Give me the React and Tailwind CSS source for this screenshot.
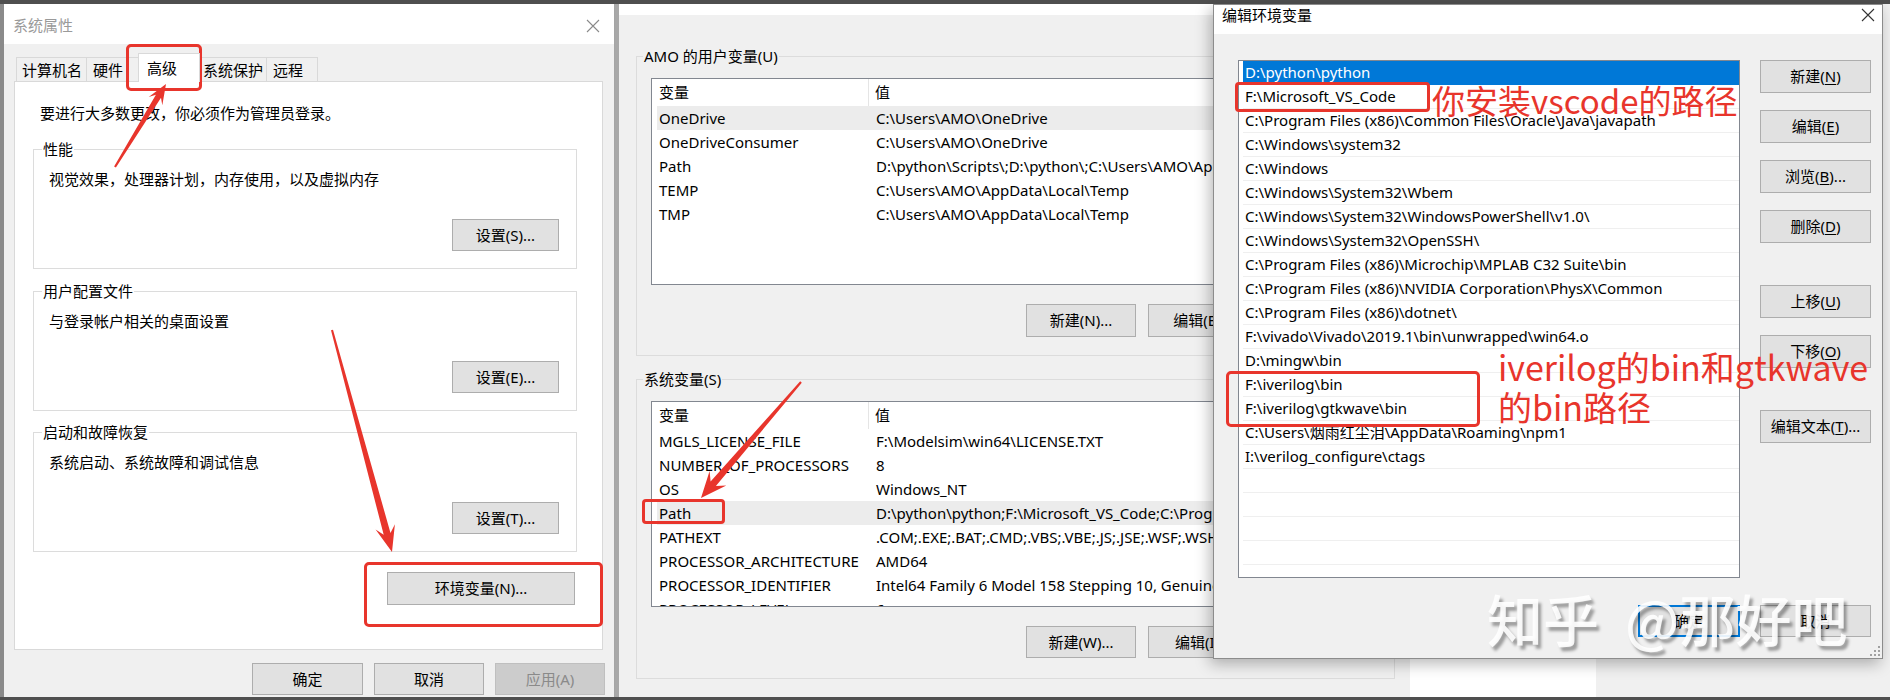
import React from 'react';

const RED = '#e8352c';

const Btn = ({ children, className = '', disabled = false, focused = false }) => (
  <div
    className={`flex shrink-0 items-center justify-center text-[15px] leading-none ${
      disabled
        ? 'border border-[#bfbfbf] bg-[#cccccc] text-[#8a8a8a]'
        : focused
        ? 'border-2 border-[#0078d7] bg-[#e1e1e1] text-black'
        : 'border border-[#adadad] bg-[#e1e1e1] text-black'
    } ${className}`}
  >
    {children}
  </div>
);

const Key = ({ k }) => <span className="underline underline-offset-2">{k}</span>;

const CloseX = ({ className }) => (
  <svg viewBox="0 0 14 14" className={className} fill="none" stroke="currentColor" strokeWidth="1.1">
    <path d="M1 1 L13 13 M13 1 L1 13" />
  </svg>
);

function arrowPts(x1, y1, x2, y2, head, hw, w0, w1) {
  const dx = x2 - x1;
  const dy = y2 - y1;
  const len = Math.hypot(dx, dy);
  const ux = dx / len;
  const uy = dy / len;
  const nx = -uy;
  const ny = ux;
  const bx = x2 - ux * head;
  const by = y2 - uy * head;
  const sx = x2 - ux * head * 0.72;
  const sy = y2 - uy * head * 0.72;
  const pts = [
    [x1 + (nx * w0) / 2, y1 + (ny * w0) / 2],
    [sx + (nx * w1) / 2, sy + (ny * w1) / 2],
    [bx + (nx * hw) / 2, by + (ny * hw) / 2],
    [x2, y2],
    [bx - (nx * hw) / 2, by - (ny * hw) / 2],
    [sx - (nx * w1) / 2, sy - (ny * w1) / 2],
    [x1 - (nx * w0) / 2, y1 - (ny * w0) / 2],
  ];
  return pts.map((p) => p.map((v) => v.toFixed(1)).join(',')).join(' ');
}

const userVars = [
  ['OneDrive', 'C:\\Users\\AMO\\OneDrive', true],
  ['OneDriveConsumer', 'C:\\Users\\AMO\\OneDrive'],
  ['Path', 'D:\\python\\Scripts\\;D:\\python\\;C:\\Users\\AMO\\AppData\\Local\\Microsoft\\WindowsApps;'],
  ['TEMP', 'C:\\Users\\AMO\\AppData\\Local\\Temp'],
  ['TMP', 'C:\\Users\\AMO\\AppData\\Local\\Temp'],
];

const sysVars = [
  ['MGLS_LICENSE_FILE', 'F:\\Modelsim\\win64\\LICENSE.TXT'],
  ['NUMBER_OF_PROCESSORS', '8'],
  ['OS', 'Windows_NT'],
  ['Path', 'D:\\python\\python;F:\\Microsoft_VS_Code;C:\\Program Files (x86)\\Common Files\\Oracle\\Java\\javapath;', true],
  ['PATHEXT', '.COM;.EXE;.BAT;.CMD;.VBS;.VBE;.JS;.JSE;.WSF;.WSH;.MSC'],
  ['PROCESSOR_ARCHITECTURE', 'AMD64'],
  ['PROCESSOR_IDENTIFIER', 'Intel64 Family 6 Model 158 Stepping 10, GenuineIntel'],
  ['PROCESSOR_LEVEL', '6'],
];

const paths = [
  'D:\\python\\python',
  'F:\\Microsoft_VS_Code',
  'C:\\Program Files (x86)\\Common Files\\Oracle\\Java\\javapath',
  'C:\\Windows\\system32',
  'C:\\Windows',
  'C:\\Windows\\System32\\Wbem',
  'C:\\Windows\\System32\\WindowsPowerShell\\v1.0\\',
  'C:\\Windows\\System32\\OpenSSH\\',
  'C:\\Program Files (x86)\\Microchip\\MPLAB C32 Suite\\bin',
  'C:\\Program Files (x86)\\NVIDIA Corporation\\PhysX\\Common',
  'C:\\Program Files (x86)\\dotnet\\',
  'F:\\vivado\\Vivado\\2019.1\\bin\\unwrapped\\win64.o',
  'D:\\mingw\\bin',
  'F:\\iverilog\\bin',
  'F:\\iverilog\\gtkwave\\bin',
  'C:\\Users\\烟雨红尘泪\\AppData\\Roaming\\npm1',
  'I:\\verilog_configure\\ctags',
  '', '', '', '', '',
];

// group box used in the left dialog
const Group = ({ title, text, btn, className = '' }) => (
  <fieldset className={`ml-[18px] w-[544px] min-w-0 border border-[#dcdcdc] pb-[17px] pl-[8px] ${className}`}>
    <legend className="px-[1px] text-[15px] leading-[20px]">{title}</legend>
    <div className="pl-[7px] pt-[10px] text-[15px] leading-[20px]">{text}</div>
    <div className="mt-[30px] flex justify-end pr-[17px]">
      <Btn className="h-[32px] w-[107px]">{btn}</Btn>
    </div>
  </fieldset>
);

function SystemProperties() {
  return (
    <div className="flex h-full w-[615px] shrink-0 flex-col border-l-4 border-r border-l-[#8a8a8a] border-r-[#a5a5a5] bg-[#f0f0f0]">
      <div className="flex h-[40px] shrink-0 items-center justify-between bg-white pl-[9px] pr-[14px] pt-[3px]">
        <span className="text-[15px] text-[#9a9a9a]">系统属性</span>
        <CloseX className="h-[14px] w-[14px] text-[#8a8a8a]" />
      </div>
      <div className="pl-[10px] pt-[9px]">
        <div className="flex items-end pl-[2px] text-[15px]">
          <div className="h-[24px] w-[70px] border-l border-t border-[#d9d9d9] pl-[5px] leading-[24px]">计算机名</div>
          <div className="h-[24px] w-[52px] border-l border-t border-[#d9d9d9] pl-[6px] leading-[24px]">硬件</div>
          <div className="relative z-10 -mb-px h-[29px] w-[62px] border-l border-r border-t border-[#d9d9d9] bg-white pl-[8px] leading-[28px]">高级</div>
          <div className="h-[24px] w-[66px] border-t border-[#d9d9d9] pl-[3px] leading-[24px]">系统保护</div>
          <div className="h-[24px] w-[52px] border-l border-r border-t border-[#d9d9d9] pl-[6px] leading-[24px]">远程</div>
        </div>
        <div className="h-[569px] w-[589px] border border-[#d9d9d9] bg-white">
          <div className="pl-[25px] pt-[21px] text-[15px] leading-[20px]">要进行大多数更改，你必须作为管理员登录。</div>
          <Group className="mt-[16px]" title="性能" text="视觉效果，处理器计划，内存使用，以及虚拟内存" btn="设置(S)..." />
          <Group className="mt-[12px]" title="用户配置文件" text="与登录帐户相关的桌面设置" btn="设置(E)..." />
          <Group className="mt-[11px]" title="启动和故障恢复" text="系统启动、系统故障和调试信息" btn="设置(T)..." />
          <div className="mt-[20px] flex justify-end pr-[27px]">
            <Btn className="h-[33px] w-[188px]">环境变量(N)...</Btn>
          </div>
        </div>
        <div className="mt-[13px] flex justify-end gap-[11px] pr-[9px]">
          <Btn className="h-[32px] w-[111px]">确定</Btn>
          <Btn className="h-[32px] w-[110px]">取消</Btn>
          <Btn disabled className="h-[32px] w-[110px]">应用(A)</Btn>
        </div>
      </div>
    </div>
  );
}

const VarList = ({ rows, height }) => (
  <div className={`w-[728px] overflow-hidden border border-[#828790] bg-white px-[5px] text-[15px] ${height}`}>
    <div className="flex h-[27px] items-center">
      <div className="h-full w-[212px] shrink-0 border-r border-[#e5e5e5] pl-[2px] leading-[27px]">变量</div>
      <div className="pl-[6px]">值</div>
    </div>
    {rows.map(([name, value, hi]) => (
      <div key={name + value} className={`flex h-[24px] items-center overflow-hidden whitespace-nowrap ${hi ? 'bg-[#ececec]' : ''}`}>
        <div className="w-[212px] shrink-0 overflow-hidden pl-[2px]">{name}</div>
        <div className="pl-[7px]">{value}</div>
      </div>
    ))}
  </div>
);

function EnvVariables() {
  return (
    <div className="flex h-full w-[791px] shrink-0 flex-col overflow-hidden bg-[#f0f0f0]">
      <div className="h-[11px] shrink-0 bg-white" />
      <fieldset className="ml-[17px] mt-[31px] w-[759px] min-w-0 border border-[#dcdcdc]">
        <legend className="ml-[6px] px-[1px] text-[15px] leading-[20px]">AMO 的用户变量(U)</legend>
        <div className="px-[14px] pb-[18px] pt-[12px]">
          <VarList rows={userVars} height="h-[207px]" />
          <div className="mt-[19px] flex justify-end gap-[12px]">
            <Btn className="h-[33px] w-[110px]">新建(N)...</Btn>
            <Btn className="h-[33px] w-[110px]">编辑(E)...</Btn>
            <Btn className="h-[33px] w-[110px]">删除(D)</Btn>
          </div>
        </div>
      </fieldset>
      <fieldset className="ml-[17px] mt-[13px] w-[759px] min-w-0 border border-[#dcdcdc]">
        <legend className="ml-[6px] px-[1px] text-[15px] leading-[20px]">系统变量(S)</legend>
        <div className="px-[14px] pb-[20px] pt-[12px]">
          <VarList rows={sysVars} height="h-[206px]" />
          <div className="mt-[19px] flex justify-end gap-[12px]">
            <Btn className="h-[32px] w-[110px]">新建(W)...</Btn>
            <Btn className="h-[32px] w-[110px]">编辑(I)...</Btn>
            <Btn className="h-[32px] w-[110px]">删除(L)</Btn>
          </div>
        </div>
      </fieldset>
    </div>
  );
}

const sideBtns = [
  [<>新建(<Key k="N" />)</>, 'mt-0'],
  [<>编辑(<Key k="E" />)</>, 'mt-[17px]'],
  [<>浏览(<Key k="B" />)...</>, 'mt-[17px]'],
  [<>删除(<Key k="D" />)</>, 'mt-[17px]'],
  [<>上移(<Key k="U" />)</>, 'mt-[42px]'],
  [<>下移(<Key k="O" />)</>, 'mt-[17px]'],
  [<>编辑文本(<Key k="T" />)...</>, 'mt-[42px]'],
];

function EditPath() {
  return (
    <div className="absolute left-[1213px] top-[4px] flex h-[655px] w-[670px] flex-col border border-[#8c8c8c] bg-[#f0f0f0] shadow-[-3px_5px_14px_rgba(0,0,0,0.28)]">
      <div className="flex h-[29px] shrink-0 items-start justify-between bg-white pl-[8px] pr-[7px]">
        <span className="text-[15px] leading-[20px]">编辑环境变量</span>
        <CloseX className="mt-[3px] h-[14px] w-[14px] text-[#333]" />
      </div>
      <div className="flex pl-[24px] pr-[11px] pt-[26px]">
        <div className="h-[518px] w-[502px] overflow-hidden border border-[#828790] bg-white pl-[4px] text-[15px]">
          {paths.map((p, i) => (
            <div
              key={i}
              className={`h-[24px] whitespace-nowrap border-b pl-[2px] leading-[23px] ${
                i === 0 ? 'border-[#0078d7] bg-[#0078d7] text-white' : 'border-[#efefef]'
              }`}
            >
              {p}
            </div>
          ))}
        </div>
        <div className="ml-[20px] flex w-[111px] flex-col">
          {sideBtns.map(([label, mt], i) => (
            <Btn key={i} className={`h-[33px] w-[111px] ${mt}`}>{label}</Btn>
          ))}
        </div>
      </div>
      <div className="mt-[27px] flex justify-end gap-[20px] pr-[11px]">
        <Btn focused className="h-[32px] w-[102px]">确定</Btn>
        <Btn className="h-[32px] w-[111px]">取消</Btn>
      </div>
      <svg className="absolute bottom-[2px] right-[2px] h-[10px] w-[10px]" viewBox="0 0 10 10" fill="#a0a0a0">
        <rect x="8" y="0" width="2" height="2" />
        <rect x="4" y="4" width="2" height="2" />
        <rect x="8" y="4" width="2" height="2" />
        <rect x="0" y="8" width="2" height="2" />
        <rect x="4" y="8" width="2" height="2" />
        <rect x="8" y="8" width="2" height="2" />
      </svg>
    </div>
  );
}

export default function App() {
  return (
    <div className="relative flex h-[700px] w-[1890px] overflow-hidden bg-[#4f4f4f] pb-[3px] pt-[4px] font-['Noto_Sans','Noto_Sans_CJK_SC',sans-serif] text-black">
      <SystemProperties />
      <div className="h-full w-[4px] shrink-0 bg-[#a8a8a8]" />
      <EnvVariables />
      <div className="h-full w-[186px] shrink-0 bg-white" />
      <div className="h-full flex-1 bg-[#f0f0f0]" />

      <EditPath />

      {/* red annotation boxes */}
      <div className="absolute left-[126px] top-[44px] h-[47px] w-[76px] rounded-[5px] border-[3px] border-[#e8352c]" />
      <div className="absolute left-[364px] top-[562px] h-[65px] w-[239px] rounded-[5px] border-[3px] border-[#e8352c]" />
      <div className="absolute left-[642px] top-[499px] h-[25px] w-[83px] rounded-[4px] border-[3px] border-[#e8352c]" />
      <div className="absolute left-[1235px] top-[82px] h-[30px] w-[195px] rounded-[4px] border-[3px] border-[#e8352c]" />
      <div className="absolute left-[1226px] top-[371px] h-[56px] w-[254px] rounded-[5px] border-[3px] border-[#e8352c]" />

      <svg className="pointer-events-none absolute left-0 top-0 h-[700px] w-[1890px]" viewBox="0 0 1890 700">
        <polygon fill={RED} points={arrowPts(115, 167, 166, 84, 20, 16, 2, 6)} />
        <polygon fill={RED} points={arrowPts(332, 330, 392, 552, 26, 20, 2, 7)} />
        <polygon fill={RED} points={arrowPts(801, 382, 701, 498, 26, 22, 2, 7)} />
      </svg>

      <div className="absolute left-[1432px] top-[83px] whitespace-nowrap font-['Noto_Sans_CJK_SC',sans-serif] text-[33px] leading-[34px] text-[#e8352c]">
        你安装vscode的路径
      </div>
      <div className="absolute left-[1498px] top-[347px] whitespace-nowrap font-['Noto_Sans_CJK_SC',sans-serif] text-[34px] leading-[40px] text-[#e8352c]">
        <div>iverilog的bin和gtkwave</div>
        <div>的bin路径</div>
      </div>

      <div className="absolute left-[1487px] top-[590px] flex whitespace-nowrap font-['Noto_Sans_CJK_SC',sans-serif] text-[56px] font-medium leading-[56px] text-white/90 [text-shadow:3px_4px_3px_rgba(0,0,0,0.35)]">
        <span>知乎</span>
        <span className="ml-[26px]">@那好吧</span>
      </div>
    </div>
  );
}
